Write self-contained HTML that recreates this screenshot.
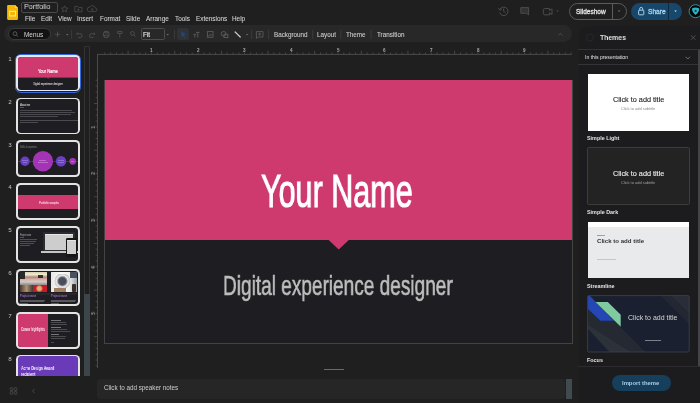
<!DOCTYPE html>
<html><head><meta charset="utf-8">
<style>
*{box-sizing:border-box;margin:0;padding:0}
html,body{width:700px;height:403px;overflow:hidden;background:#1f1f1f;font-family:"Liberation Sans",sans-serif;color:#e3e3e3}
.a{position:absolute}
.t{position:absolute;white-space:nowrap;line-height:1;will-change:transform}
svg.s{position:absolute;left:0;top:0;overflow:visible}
</style></head><body>
<svg class="s" width="700" height="403" style="z-index:1">
<path d="M8.2 5 H15 L18 8 V18.8 Q18 19.9 16.9 19.9 H8.2 Q7.1 19.9 7.1 18.8 V6.1 Q7.1 5 8.2 5 Z" fill="#f6b700"/>
<path d="M15 5 L18 8 H15 Z" fill="#fbd46a"/>
<rect x="9.6" y="11.3" width="5.9" height="4.6" fill="none" stroke="#fde7a8" stroke-width="1.1"/>
</svg>
<div class="a" style="left:21px;top:2px;width:37px;height:10.5px;border:0.8px solid #4a4a4a;border-radius:2px"></div>
<div class="t" style="left:23.8px;top:2.9px;font-size:8.0px;color:#dadada;font-weight:normal;transform:scaleX(0.9);transform-origin:0 0">Portfolio</div>
<svg class="s" width="700" height="403">
<g fill="none" stroke="#4c4c4c" stroke-width="0.8">
<path d="M64.6 5.8 L65.6 7.9 L67.8 8.2 L66.1 9.6 L66.6 11.8 L64.6 10.7 L62.6 11.8 L63.1 9.6 L61.4 8.2 L63.6 7.9 Z"/>
<path d="M74.8 6.4 H77.6 L78.6 7.4 H82 V11.8 H74.8 Z"/><path d="M78.4 8.6 V10.8 M77.3 9.7 H79.5"/>
<path d="M89.2 11.6 H95 A1.9 1.9 0 0 0 95 7.8 A2.9 2.9 0 0 0 89.6 7.2 A2.2 2.2 0 0 0 89.2 11.6 Z"/><path d="M92.2 11 V8.6 M91.2 9.6 L92.2 8.6 L93.2 9.6"/>
</g></svg>
<div class="t" style="left:24.5px;top:15.7px;font-size:6.4px;color:#d8d8d8;font-weight:normal;-webkit-text-stroke:0.05px #d8d8d8">File</div>
<div class="t" style="left:40.6px;top:15.7px;font-size:6.4px;color:#d8d8d8;font-weight:normal;-webkit-text-stroke:0.05px #d8d8d8">Edit</div>
<div class="t" style="left:57.8px;top:15.7px;font-size:6.4px;color:#d8d8d8;font-weight:normal;-webkit-text-stroke:0.05px #d8d8d8">View</div>
<div class="t" style="left:77px;top:15.7px;font-size:6.4px;color:#d8d8d8;font-weight:normal;-webkit-text-stroke:0.05px #d8d8d8">Insert</div>
<div class="t" style="left:100px;top:15.7px;font-size:6.4px;color:#d8d8d8;font-weight:normal;-webkit-text-stroke:0.05px #d8d8d8">Format</div>
<div class="t" style="left:126px;top:15.7px;font-size:6.4px;color:#d8d8d8;font-weight:normal;-webkit-text-stroke:0.05px #d8d8d8">Slide</div>
<div class="t" style="left:146px;top:15.7px;font-size:6.4px;color:#d8d8d8;font-weight:normal;-webkit-text-stroke:0.05px #d8d8d8">Arrange</div>
<div class="t" style="left:175px;top:15.7px;font-size:6.4px;color:#d8d8d8;font-weight:normal;-webkit-text-stroke:0.05px #d8d8d8">Tools</div>
<div class="t" style="left:196px;top:15.7px;font-size:6.4px;color:#d8d8d8;font-weight:normal;-webkit-text-stroke:0.05px #d8d8d8">Extensions</div>
<div class="t" style="left:232px;top:15.7px;font-size:6.4px;color:#d8d8d8;font-weight:normal;-webkit-text-stroke:0.05px #d8d8d8">Help</div>
<svg class="s" width="700" height="403">
<g fill="none" stroke="#4c4c4c" stroke-width="1">
<path d="M500 9.2 A4.3 4.3 0 1 1 499.6 12.5"/><path d="M498.6 8.2 L499.9 10.2 L501.8 9"/><path d="M503.6 8.6 V11.3 L505.4 12.5"/>
<path d="M520.8 7.6 H528.6 V15 L526.6 13.3 H520.8 Z" fill="#333"/>
<path d="M543.3 10.2 Q543.3 8.6 544.9 8.6 H549.5 V10.6 L552 8.8 V14.6 L549.5 12.8 V14.9 H544.9 Q543.3 14.9 543.3 13.3 Z"/>
</g>
<path d="M556.2 10.6 H558.8 L557.5 12 Z" fill="#4c4c4c"/>
</svg>
<div class="a" style="left:568.5px;top:2.8px;width:58.6px;height:16.9px;border:0.9px solid #5c5c5c;border-radius:9px"></div>
<div class="a" style="left:611.6px;top:2.8px;width:0.9px;height:16.9px;background:#5c5c5c"></div>
<div class="t" style="left:575.6px;top:8.5px;font-size:6.5px;color:#e3e3e3;font-weight:normal;-webkit-text-stroke:0.3px #e3e3e3">Slideshow</div>
<svg class="s" width="700" height="403"><path d="M617.8 10.6 H620.4 L619.1 12 Z" fill="#777"/></svg>
<div class="a" style="left:630.6px;top:2.8px;width:51.5px;height:16.9px;background:#17486b;border-radius:9px"></div>
<div class="a" style="left:668.4px;top:2.8px;width:0.9px;height:16.9px;background:#0e2b40"></div>
<div class="t" style="left:647.9px;top:8.5px;font-size:6.6px;color:#a9d3f2;font-weight:normal;-webkit-text-stroke:0.3px #a9d3f2">Share</div>
<svg class="s" width="700" height="403">
<rect x="638.6" y="10.2" width="5.2" height="4.6" rx="0.6" fill="none" stroke="#b8dbf5" stroke-width="0.9"/>
<path d="M639.7 10.2 V8.9 A1.5 1.5 0 0 1 642.7 8.9 V10.2" fill="none" stroke="#b8dbf5" stroke-width="0.9"/>
<path d="M674.3 10.6 H676.9 L675.6 12 Z" fill="#cfe6f7"/>
</svg>
<svg class="s" width="700" height="403">
<circle cx="695.6" cy="11.2" r="6.5" fill="#050708" stroke="#2aa3b5" stroke-width="0.9"/>
<path d="M692 8.6 Q695.6 6.6 699.2 8.6 Q699.2 12.6 695.6 15 Q692 12.6 692 8.6 Z" fill="#2ab3c4"/>
<circle cx="695.6" cy="10.9" r="1.1" fill="#1a3a44"/>
</svg>
<div class="a" style="left:4px;top:25px;width:567.5px;height:17.4px;background:#282828;border-radius:8.7px"></div>
<div class="a" style="left:8.4px;top:28.3px;width:42.6px;height:11.8px;background:#131313;border:0.9px solid #3a3a3a;border-radius:6px"></div>
<div class="t" style="left:24px;top:31.6px;font-size:6.4px;color:#d6d6d6;font-weight:normal;">Menus</div>
<svg class="s" width="700" height="403">
<g fill="none" stroke="#5e5e5e" stroke-width="0.9">
<circle cx="15" cy="33.6" r="1.9"/><path d="M16.4 35 L18 36.6"/>
</g>
<g fill="none" stroke="#505050" stroke-width="0.9">
<path d="M57.5 31.6 V37 M54.8 34.3 H60.2"/>
<path d="M77.6 32.6 L76.6 33.8 L77.8 34.8 M76.8 33.8 H80.2 A1.9 1.9 0 0 1 80.2 37.6 H78.2"/>
<path d="M94 32.6 L95 33.8 L93.8 34.8 M94.8 33.8 H91.4 A1.9 1.9 0 0 0 91.4 37.6 H93.4"/>
<path d="M104.2 32.8 V31.4 H108.2 V32.8 M103.4 32.8 H109 V36.2 H107.8 M104.6 36.2 H103.4 V32.8 M104.6 35.2 H107.8 V37.6 H104.6 Z"/>
<path d="M117.6 31.4 H122 V33.4 H117.6 Z M119.8 33.4 V34.6 M119.8 34.6 V37.6"/>
<circle cx="132.4" cy="33.4" r="1.9"/><path d="M133.8 34.8 L135.6 36.6"/>
</g>
<path d="M66 34 H68.6 L67.3 35.4 Z" fill="#6a6a6a"/>
<rect x="71.2" y="30" width="0.9" height="9" fill="#3e3e3e"/>
<path d="M166.4 34 H169 L167.7 35.4 Z" fill="#6a6a6a"/>
<rect x="174" y="30" width="0.9" height="9" fill="#3e3e3e"/>
</svg>
<div class="a" style="left:141.4px;top:28.3px;width:23.8px;height:11.8px;border:0.9px solid #4c4c4c;border-radius:1.5px"></div>
<div class="t" style="left:142.6px;top:31.6px;font-size:6.4px;color:#e3e3e3;font-weight:normal;-webkit-text-stroke:0.15px #e3e3e3">Fit</div>
<div class="a" style="left:177px;top:28px;width:12px;height:12px;background:#303336;border-radius:2.5px"></div>
<svg class="s" width="700" height="403">
<path d="M181.2 31 L186.2 34.6 L183.8 35 L185.2 37.8 L184.2 38.3 L182.8 35.6 L181.2 37.2 Z" fill="#21467a"/>
<g fill="none" stroke="#5c5c5c" stroke-width="0.9">
<path d="M193.4 34.4 H196.2 M194.8 34.4 V37.6 M196 32.4 H199.6 M197.8 32.4 V37.6"/>
<rect x="207.4" y="31.6" width="5.6" height="5.6"/><path d="M208.4 36.2 L210 34.4 L211 35.4 L212 34.2"/>
<circle cx="223.6" cy="33.8" r="2.4"/><rect x="224" y="34.2" width="3.8" height="3.4"/>
</g>
<path d="M234.8 31.6 L240.6 37.4" stroke="#d8d8d8" stroke-width="1.3"/>
<path d="M245.8 34 H248.4 L247.1 35.4 Z" fill="#6a6a6a"/>
<rect x="251.2" y="30" width="0.9" height="9" fill="#3e3e3e"/>
<path d="M256.4 31.6 H263 V37 H258.2 L256.4 38.4 Z M259.7 32.6 V35.6 M258.2 34.1 H261.2" fill="none" stroke="#5a5a5a" stroke-width="0.9"/>
<rect x="268.2" y="30" width="0.9" height="9" fill="#3e3e3e"/>
<rect x="312.3" y="30" width="0.9" height="9" fill="#3e3e3e"/>
<rect x="340.4" y="30" width="0.9" height="9" fill="#3e3e3e"/>
<rect x="370.6" y="30" width="0.9" height="9" fill="#3e3e3e"/>
<path d="M558.4 35.4 L560.4 33.4 L562.4 35.4" fill="none" stroke="#505050" stroke-width="0.9"/>
</svg>
<div class="t" style="left:273.7px;top:32.0px;font-size:6.3px;color:#c8c8c8;font-weight:normal;-webkit-text-stroke:0.1px #c8c8c8">Background</div>
<div class="t" style="left:317px;top:32.0px;font-size:6.3px;color:#c8c8c8;font-weight:normal;-webkit-text-stroke:0.1px #c8c8c8">Layout</div>
<div class="t" style="left:346.2px;top:32.0px;font-size:6.3px;color:#c8c8c8;font-weight:normal;-webkit-text-stroke:0.1px #c8c8c8">Theme</div>
<div class="t" style="left:377px;top:32.0px;font-size:6.3px;color:#c8c8c8;font-weight:normal;-webkit-text-stroke:0.1px #c8c8c8">Transition</div>
<svg class="s" width="700" height="403">
<path d="M97 54.4 H571.5 M97.5 54.4 V368" stroke="#4a4a4a" stroke-width="1" fill="none"/>
<path d="M104.80 54.4 V52.50 M110.63 54.4 V52.50 M116.46 54.4 V52.50 M122.29 54.4 V52.50 M128.12 54.4 V50.80 M133.95 54.4 V52.50 M139.78 54.4 V52.50 M145.61 54.4 V52.50 M151.44 54.4 V52.50 M157.27 54.4 V52.50 M163.10 54.4 V52.50 M168.93 54.4 V52.50 M174.76 54.4 V50.80 M180.59 54.4 V52.50 M186.42 54.4 V52.50 M192.25 54.4 V52.50 M198.08 54.4 V52.50 M203.91 54.4 V52.50 M209.74 54.4 V52.50 M215.57 54.4 V52.50 M221.40 54.4 V50.80 M227.23 54.4 V52.50 M233.06 54.4 V52.50 M238.89 54.4 V52.50 M244.72 54.4 V52.50 M250.55 54.4 V52.50 M256.38 54.4 V52.50 M262.21 54.4 V52.50 M268.04 54.4 V50.80 M273.87 54.4 V52.50 M279.70 54.4 V52.50 M285.53 54.4 V52.50 M291.36 54.4 V52.50 M297.19 54.4 V52.50 M303.02 54.4 V52.50 M308.85 54.4 V52.50 M314.68 54.4 V50.80 M320.51 54.4 V52.50 M326.34 54.4 V52.50 M332.17 54.4 V52.50 M338.00 54.4 V52.50 M343.83 54.4 V52.50 M349.66 54.4 V52.50 M355.49 54.4 V52.50 M361.32 54.4 V50.80 M367.15 54.4 V52.50 M372.98 54.4 V52.50 M378.81 54.4 V52.50 M384.64 54.4 V52.50 M390.47 54.4 V52.50 M396.30 54.4 V52.50 M402.13 54.4 V52.50 M407.96 54.4 V50.80 M413.79 54.4 V52.50 M419.62 54.4 V52.50 M425.45 54.4 V52.50 M431.28 54.4 V52.50 M437.11 54.4 V52.50 M442.94 54.4 V52.50 M448.77 54.4 V52.50 M454.60 54.4 V50.80 M460.43 54.4 V52.50 M466.26 54.4 V52.50 M472.09 54.4 V52.50 M477.92 54.4 V52.50 M483.75 54.4 V52.50 M489.58 54.4 V52.50 M495.41 54.4 V52.50 M501.24 54.4 V50.80 M507.07 54.4 V52.50 M512.90 54.4 V52.50 M518.73 54.4 V52.50 M524.56 54.4 V52.50 M530.39 54.4 V52.50 M536.22 54.4 V52.50 M542.05 54.4 V52.50 M547.88 54.4 V50.80 M553.71 54.4 V52.50 M559.54 54.4 V52.50 M565.37 54.4 V52.50 M571.20 54.4 V52.50 M97.5 80.20 H95.60 M97.5 86.03 H95.60 M97.5 91.86 H95.60 M97.5 97.69 H95.60 M97.5 103.52 H93.90 M97.5 109.35 H95.60 M97.5 115.18 H95.60 M97.5 121.01 H95.60 M97.5 126.84 H95.60 M97.5 132.67 H95.60 M97.5 138.50 H95.60 M97.5 144.33 H95.60 M97.5 150.16 H93.90 M97.5 155.99 H95.60 M97.5 161.82 H95.60 M97.5 167.65 H95.60 M97.5 173.48 H95.60 M97.5 179.31 H95.60 M97.5 185.14 H95.60 M97.5 190.97 H95.60 M97.5 196.80 H93.90 M97.5 202.63 H95.60 M97.5 208.46 H95.60 M97.5 214.29 H95.60 M97.5 220.12 H95.60 M97.5 225.95 H95.60 M97.5 231.78 H95.60 M97.5 237.61 H95.60 M97.5 243.44 H93.90 M97.5 249.27 H95.60 M97.5 255.10 H95.60 M97.5 260.93 H95.60 M97.5 266.76 H95.60 M97.5 272.59 H95.60 M97.5 278.42 H95.60 M97.5 284.25 H95.60 M97.5 290.08 H93.90 M97.5 295.91 H95.60 M97.5 301.74 H95.60 M97.5 307.57 H95.60 M97.5 313.40 H95.60 M97.5 319.23 H95.60 M97.5 325.06 H95.60 M97.5 330.89 H95.60 M97.5 336.72 H93.90 M97.5 342.55 H95.60 M97.5 348.38 H95.60 M97.5 354.21 H95.60 M97.5 360.04 H95.60 M97.5 365.87 H95.60" stroke="#505050" stroke-width="0.8" fill="none"/>
</svg>
<div class="t" style="left:150.04px;top:49.2px;font-size:4.6px;color:#a8a8a8;font-weight:bold;">1</div>
<div class="t" style="left:196.67999999999998px;top:49.2px;font-size:4.6px;color:#a8a8a8;font-weight:bold;">2</div>
<div class="t" style="left:243.32000000000002px;top:49.2px;font-size:4.6px;color:#a8a8a8;font-weight:bold;">3</div>
<div class="t" style="left:289.96000000000004px;top:49.2px;font-size:4.6px;color:#a8a8a8;font-weight:bold;">4</div>
<div class="t" style="left:336.6px;top:49.2px;font-size:4.6px;color:#a8a8a8;font-weight:bold;">5</div>
<div class="t" style="left:383.24000000000007px;top:49.2px;font-size:4.6px;color:#a8a8a8;font-weight:bold;">6</div>
<div class="t" style="left:429.88000000000005px;top:49.2px;font-size:4.6px;color:#a8a8a8;font-weight:bold;">7</div>
<div class="t" style="left:476.52000000000004px;top:49.2px;font-size:4.6px;color:#a8a8a8;font-weight:bold;">8</div>
<div class="t" style="left:523.16px;top:49.2px;font-size:4.6px;color:#a8a8a8;font-weight:bold;">9</div>
<div class="t" style="left:92px;top:123.74px;font-size:4.6px;color:#a0a0a0;font-weight:bold;transform:rotate(-90deg);transform-origin:2.3px 2.3px">1</div>
<div class="t" style="left:92px;top:170.38px;font-size:4.6px;color:#a0a0a0;font-weight:bold;transform:rotate(-90deg);transform-origin:2.3px 2.3px">2</div>
<div class="t" style="left:92px;top:217.02px;font-size:4.6px;color:#a0a0a0;font-weight:bold;transform:rotate(-90deg);transform-origin:2.3px 2.3px">3</div>
<div class="t" style="left:92px;top:263.66px;font-size:4.6px;color:#a0a0a0;font-weight:bold;transform:rotate(-90deg);transform-origin:2.3px 2.3px">4</div>
<div class="t" style="left:92px;top:310.30px;font-size:4.6px;color:#a0a0a0;font-weight:bold;transform:rotate(-90deg);transform-origin:2.3px 2.3px">5</div>
<div class="a" style="left:103.9px;top:79.6px;width:469px;height:264.2px;background:#434343"></div>
<div class="a" style="left:104.8px;top:80.2px;width:467.2px;height:262.4px;background:#1e1d22"></div>
<div class="a" style="left:104.8px;top:80.2px;width:467.2px;height:159.6px;background:#cf3a6e"></div>
<svg class="s" width="700" height="403"><path d="M328.6 240 L348.8 240 L338.7 249.4 Z" fill="#cf3a6e"/></svg>
<div class="t" style="left:261.2px;top:168.5px;font-size:45.6px;color:#ffffff;font-weight:normal;transform:scaleX(0.67);transform-origin:0 0;-webkit-text-stroke:1.1px #fff">Your Name</div>
<div class="t" style="left:222.8px;top:271.7px;font-size:27.6px;color:#bdbdbd;font-weight:normal;transform:scaleX(0.69);transform-origin:0 0;-webkit-text-stroke:0.6px #bdbdbd">Digital experience designer</div>
<div class="a" style="left:324.3px;top:369px;width:20.2px;height:0.9px;background:#6a6a6a"></div>
<div class="a" style="left:97.1px;top:379px;width:468.4px;height:19.8px;background:#262626;border-radius:3px"></div>
<div class="t" style="left:104px;top:385.0px;font-size:6.3px;color:#cfcfcf;font-weight:normal;">Click to add speaker notes</div>
<div class="a" style="left:565.5px;top:378.6px;width:6.3px;height:20.4px;background:#414a4f;border-radius:0"></div>
<div class="t" style="left:10.2px;top:55.9px;font-size:6.2px;color:#c4c7c5;font-weight:normal;transform:translateX(-50%)">1</div>
<div class="a" style="left:15.100000000000001px;top:53.9px;width:66.1px;height:38.9px;border:1.6px solid #3567dc;border-radius:5.8px"></div>
<div class="a" style="left:16.400000000000002px;top:54.8px;width:63.5px;height:36.699999999999996px;background:#e6e9f2;border-radius:4.4px"></div>
<div class="a" style="left:18.1px;top:56.50px;width:60.1px;height:33.3px;border-radius:3px;overflow:hidden;background:#1e1d22"><div class="a" style="left:0;top:0;width:466.5px;height:262.4px;transform:scale(0.12883);transform-origin:0 0"><div class="a" style="left:0px;top:0px;width:466.5px;height:160px;background:#cf3a6e"></div><svg class="s" width="466" height="262"><path d="M223.8 159.8 L244 159.8 L233.9 169.2 Z" fill="#cf3a6e"/></svg><div class="t" style="left:156.4px;top:88.3px;font-size:45.6px;color:#fff;font-weight:normal;transform:scaleX(0.67);transform-origin:0 0;-webkit-text-stroke:1.5px #fff">Your Name</div><div class="t" style="left:118px;top:192.3px;font-size:27.6px;color:#c8c8c8;font-weight:normal;transform:scaleX(0.69);transform-origin:0 0;-webkit-text-stroke:1px #c8c8c8">Digital experience designer</div></div></div>
<div class="t" style="left:10.2px;top:98.75px;font-size:6.2px;color:#c4c7c5;font-weight:normal;transform:translateX(-50%)">2</div>
<div class="a" style="left:16.3px;top:97.55px;width:63.7px;height:36.9px;background:#e3e3e3;border-radius:4.6px"></div>
<div class="a" style="left:18.1px;top:99.35px;width:60.1px;height:33.3px;border-radius:3px;overflow:hidden;background:#1e1d22"><div class="t" style="left:2.0px;top:4.2px;font-size:3.1px;color:#d4d4d4;font-weight:bold;transform:scaleX(0.72);transform-origin:0 0">About me</div><div class="a" style="left:2.0px;top:7.3px;width:4.4px;height:0.5px;background:#555"></div><div class="a" style="left:2.0px;top:10.2px;width:51.9px;height:0.9px;background:#4a4a4f"></div><div class="a" style="left:2.0px;top:12.4px;width:55.1px;height:0.9px;background:#4a4a4f"></div><div class="a" style="left:2.0px;top:14.5px;width:51px;height:0.9px;background:#4a4a4f"></div><div class="a" style="left:2.0px;top:16.5px;width:38.2px;height:0.9px;background:#4a4a4f"></div><div class="a" style="left:2.0px;top:20.2px;width:57.9px;height:0.9px;background:#4a4a4f"></div><div class="a" style="left:2.0px;top:22.5px;width:17.7px;height:0.9px;background:#4a4a4f"></div></div>
<div class="t" style="left:10.2px;top:141.6px;font-size:6.2px;color:#c4c7c5;font-weight:normal;transform:translateX(-50%)">3</div>
<div class="a" style="left:16.3px;top:140.39999999999998px;width:63.7px;height:36.9px;background:#e3e3e3;border-radius:4.6px"></div>
<div class="a" style="left:18.1px;top:142.20px;width:60.1px;height:33.3px;border-radius:3px;overflow:hidden;background:#1e1d22"><div class="t" style="left:2.2px;top:5.0px;font-size:2.7px;color:#8a8a8a;font-weight:normal;transform:scaleX(0.82);transform-origin:0 0">Skills &amp; expertise</div><div class="a" style="left:0px;top:19.2px;width:60.1px;height:0.4px;background:#3a3a3e"></div><svg class="s" width="62" height="34"><circle cx="7.0" cy="19.3" r="4.7" fill="#6b3fc4"/><circle cx="24.9" cy="19.3" r="10.2" fill="#a234b5"/><circle cx="43.0" cy="19.3" r="5.2" fill="#6b3fc4"/><circle cx="54.7" cy="19.3" r="3.4" fill="#a234b5"/></svg><div class="a" style="left:4.3px;top:18.2px;width:5.4px;height:0.5px;background:#8a6cd6"></div><div class="a" style="left:4.6px;top:19.8px;width:4.8px;height:0.5px;background:#8a6cd6"></div><div class="a" style="left:21.4px;top:18.0px;width:7px;height:0.5px;background:#c06bcf"></div><div class="a" style="left:19.6px;top:20.2px;width:10.6px;height:0.5px;background:#c06bcf"></div><div class="a" style="left:40.2px;top:18.2px;width:5.6px;height:0.5px;background:#8a6cd6"></div><div class="a" style="left:40.4px;top:19.8px;width:5.2px;height:0.5px;background:#8a6cd6"></div><div class="a" style="left:53.2px;top:19.1px;width:3px;height:0.5px;background:#c06bcf"></div></div>
<div class="t" style="left:10.2px;top:184.45000000000002px;font-size:6.2px;color:#c4c7c5;font-weight:normal;transform:translateX(-50%)">4</div>
<div class="a" style="left:16.3px;top:183.25px;width:63.7px;height:36.9px;background:#e3e3e3;border-radius:4.6px"></div>
<div class="a" style="left:18.1px;top:185.05px;width:60.1px;height:33.3px;border-radius:3px;overflow:hidden;background:#1e1d22"><div class="a" style="left:0px;top:9.6px;width:60.1px;height:14.2px;background:#cf3a6e"></div><div class="t" style="left:30.6px;top:16.9px;font-size:3.1px;color:#f8dce6;font-weight:bold;transform:translateX(-50%) scaleX(0.76)">Portfolio samples</div></div>
<div class="t" style="left:10.2px;top:227.3px;font-size:6.2px;color:#c4c7c5;font-weight:normal;transform:translateX(-50%)">5</div>
<div class="a" style="left:16.3px;top:226.1px;width:63.7px;height:36.9px;background:#e3e3e3;border-radius:4.6px"></div>
<div class="a" style="left:18.1px;top:227.90px;width:60.1px;height:33.3px;border-radius:3px;overflow:hidden;background:#1e1d22"><div class="t" style="left:2.1px;top:7.4px;font-size:2.6px;color:#bdbdbd;font-weight:normal;transform:scaleX(0.72);transform-origin:0 0">Project name</div><div class="a" style="left:2.1px;top:9.4px;width:3.8px;height:0.4px;background:#555"></div><div class="a" style="left:2.1px;top:11.5px;width:16.8px;height:0.8px;background:#4e4e52"></div><div class="a" style="left:2.1px;top:13.3px;width:16.2px;height:0.8px;background:#4e4e52"></div><div class="a" style="left:2.1px;top:15.1px;width:13.5px;height:0.8px;background:#4e4e52"></div><div class="a" style="left:2.1px;top:16.9px;width:10px;height:0.8px;background:#4e4e52"></div><div class="a" style="left:25.3px;top:4.1px;width:31.6px;height:19.2px;background:#2c2c2e;border-radius:1px"></div><div class="a" style="left:26.7px;top:6.0px;width:28.3px;height:15.8px;background:#cdcdcd"></div><div class="a" style="left:26.7px;top:6.0px;width:28.3px;height:1.6px;background:#e6e6e6"></div><div class="a" style="left:22.6px;top:23.1px;width:38px;height:2.1px;background:#c6c6c6"></div><div class="a" style="left:47.9px;top:10.2px;width:10.8px;height:19.2px;background:#161616;border-radius:1.4px"></div><div class="a" style="left:49.1px;top:12.0px;width:8.5px;height:14.6px;background:#cfcfcf"></div><div class="a" style="left:49.1px;top:12.0px;width:8.5px;height:1.2px;background:#e4e4e4"></div></div>
<div class="t" style="left:10.2px;top:270.15px;font-size:6.2px;color:#c4c7c5;font-weight:normal;transform:translateX(-50%)">6</div>
<div class="a" style="left:16.3px;top:268.95px;width:63.7px;height:36.9px;background:#e3e3e3;border-radius:4.6px"></div>
<div class="a" style="left:18.1px;top:270.75px;width:60.1px;height:33.3px;border-radius:3px;overflow:hidden;background:#1e1d22"><div class="a" style="left:1.9px;top:0.9px;width:26.9px;height:13.7px;background:linear-gradient(180deg,#d8d2b0 0%,#f0ead0 20%,#a88a80 40%,#e0a8a0 55%,#d0ccc8 75%,#8a8a8a 100%)"></div><div class="a" style="left:1.9px;top:0.9px;width:5px;height:7px;background:#2a2a2a"></div><div class="a" style="left:20px;top:4.5px;width:5px;height:3px;background:#303030"></div><div class="a" style="left:1.9px;top:14.6px;width:13.5px;height:7.1px;background:linear-gradient(90deg,#4a3a2a,#b09070 50%,#3a3a3a)"></div><div class="a" style="left:15.4px;top:14.6px;width:13.4px;height:7.1px;background:radial-gradient(circle at 45% 50%,#e0b070 0 22%,#c8182a 45%)"></div><div class="a" style="left:32.6px;top:0.9px;width:26.4px;height:20.8px;background:linear-gradient(90deg,#e8e8e8 0%,#fafaf8 40%,#f0f0f0 70%,#9aa0a8 100%)"></div><div class="a" style="left:52px;top:0.9px;width:7px;height:6px;background:#4a5260"></div><div class="a" style="left:34.6px;top:3.2px;width:17px;height:16px;background:radial-gradient(circle at 55% 45%,#4a4e58 0 26%,#7a7e88 34%,#ecebea 44%,#c8c4bc 60%,rgba(0,0,0,0) 62%)"></div><div class="a" style="left:54px;top:13px;width:4px;height:8px;background:#3a2e26;border-radius:1px"></div><div class="a" style="left:36px;top:17px;width:12px;height:4.7px;background:#a08060"></div><div class="a" style="left:1.9px;top:22.2px;width:57.1px;height:2.4px;background:#26262b"></div><div class="t" style="left:1.9px;top:25.4px;font-size:2.6px;color:#a26ac6;font-weight:bold;">Project name</div><div class="t" style="left:32.6px;top:25.4px;font-size:2.6px;color:#a26ac6;font-weight:bold;">Project name</div><div class="a" style="left:1.9px;top:28.8px;width:25px;height:0.6px;background:#58585c"></div><div class="a" style="left:1.9px;top:30.5px;width:24px;height:0.6px;background:#58585c"></div><div class="a" style="left:1.9px;top:31.8px;width:8px;height:0.6px;background:#58585c"></div><div class="a" style="left:32.6px;top:28.8px;width:25px;height:0.6px;background:#58585c"></div><div class="a" style="left:32.6px;top:30.5px;width:24px;height:0.6px;background:#58585c"></div><div class="a" style="left:32.6px;top:31.8px;width:8px;height:0.6px;background:#58585c"></div></div>
<div class="t" style="left:10.2px;top:313.0px;font-size:6.2px;color:#c4c7c5;font-weight:normal;transform:translateX(-50%)">7</div>
<div class="a" style="left:16.3px;top:311.8px;width:63.7px;height:36.9px;background:#e3e3e3;border-radius:4.6px"></div>
<div class="a" style="left:18.1px;top:313.60px;width:60.1px;height:33.3px;border-radius:3px;overflow:hidden;background:#1e1d22"><div class="a" style="left:0px;top:0px;width:30.3px;height:33.3px;background:#cf3a6e"></div><div class="t" style="left:3.0px;top:13.4px;font-size:5.0px;color:#fbe3eb;font-weight:bold;transform:scaleX(0.58);transform-origin:0 0">Career highlights</div><div class="a" style="left:32.8px;top:6.6px;width:10px;height:0.7px;background:#76767a"></div><div class="a" style="left:32.8px;top:8.4px;width:15px;height:0.7px;background:#4a4a4f"></div><div class="a" style="left:32.8px;top:10.3px;width:16px;height:0.7px;background:#4a4a4f"></div><div class="a" style="left:32.8px;top:13.6px;width:10px;height:0.7px;background:#76767a"></div><div class="a" style="left:32.8px;top:15.4px;width:16px;height:0.7px;background:#4a4a4f"></div><div class="a" style="left:32.8px;top:17.3px;width:19px;height:0.7px;background:#4a4a4f"></div><div class="a" style="left:32.8px;top:20.6px;width:8px;height:0.7px;background:#76767a"></div><div class="a" style="left:32.8px;top:22.4px;width:15px;height:0.7px;background:#4a4a4f"></div><div class="a" style="left:32.8px;top:24.2px;width:14px;height:0.7px;background:#4a4a4f"></div><div class="a" style="left:32.8px;top:28.4px;width:3px;height:0.7px;background:#4a4a4f"></div></div>
<div class="t" style="left:10.2px;top:355.84999999999997px;font-size:6.2px;color:#c4c7c5;font-weight:normal;transform:translateX(-50%)">8</div>
<div class="a" style="left:0;top:0;width:100px;height:375.8px;overflow:hidden"><div class="a" style="left:16.3px;top:354.65px;width:63.7px;height:36.9px;background:#e3e3e3;border-radius:4.6px"></div><div class="a" style="left:18.1px;top:356.45px;width:60.1px;height:33.3px;background:#6a3bb8;border-radius:3px"></div><div class="t" style="left:21.2px;top:365.65px;font-size:6.0px;line-height:5.5px;font-weight:bold;color:#f4eefe;transform:scaleX(0.575);transform-origin:0 0">Acme Design Award<br>recipient</div></div>
<div class="a" style="left:83.8px;top:46.2px;width:6.2px;height:329.5px;border:0.8px solid #333;border-radius:1px"></div>
<div class="a" style="left:84.0px;top:294.2px;width:6.0px;height:81.5px;background:#3c4549"></div>
<svg class="s" width="700" height="403">
<g fill="none" stroke="#4a4a4a" stroke-width="0.9">
<rect x="10.2" y="387.8" width="2.6" height="2.6" rx="0.4"/><rect x="14.2" y="387.8" width="2.6" height="2.6" rx="0.4"/>
<rect x="10.2" y="391.6" width="2.6" height="2.6" rx="0.4"/><rect x="14.2" y="391.6" width="2.6" height="2.6" rx="0.4"/>
<path d="M34.6 388.8 L32.6 391 L34.6 393.2"/>
</g></svg>
<div class="a" style="left:579px;top:25.6px;width:130px;height:400px;background:#1c1c1f;border-radius:10px 0 0 0"></div>
<svg class="s" width="700" height="403">
<circle cx="590" cy="37.6" r="3.6" fill="none" stroke="#29292c" stroke-width="0.9"/>
<path d="M691 35.4 L695.4 39.8 M695.4 35.4 L691 39.8" stroke="#555" stroke-width="0.9"/>
<path d="M685.6 56.8 L687.8 59 L690 56.8" stroke="#777" stroke-width="0.9" fill="none"/>
</svg>
<div class="t" style="left:600.3px;top:34.0px;font-size:7.8px;color:#e3e3e3;font-weight:bold;transform:scaleX(0.88);transform-origin:0 0">Themes</div>
<div class="a" style="left:578.4px;top:49px;width:122px;height:0.8px;background:#333336"></div>
<div class="t" style="left:584.9px;top:55.0px;font-size:5.1px;color:#d4d4d4;font-weight:normal;-webkit-text-stroke:0.05px #d4d4d4">In this presentation</div>
<div class="a" style="left:578.4px;top:64.3px;width:122px;height:0.8px;background:#333336"></div>
<div class="a" style="left:698px;top:49.7px;width:2px;height:316px;background:#444447"></div>
<div class="a" style="left:587.9px;top:74px;width:100.8px;height:57px;background:#ffffff"></div>
<div class="t" style="left:612.7px;top:96.0px;font-size:7.27px;color:#202020;font-weight:normal;-webkit-text-stroke:0.1px #202020">Click to add title</div>
<div class="t" style="left:621.3px;top:106.8px;font-size:3.94px;color:#888888;font-weight:normal;">Click to add subtitle</div>
<div class="t" style="left:587.1px;top:136.2px;font-size:5.4px;color:#e3e3e3;font-weight:bold;">Simple Light</div>
<div class="a" style="left:587.2px;top:147.1px;width:102.4px;height:58.2px;background:#232323;border:0.9px solid #3c3c3c;border-radius:1.5px"></div>
<div class="t" style="left:612.5px;top:169.8px;font-size:7.27px;color:#f0f0f0;font-weight:normal;-webkit-text-stroke:0.1px #f0f0f0">Click to add title</div>
<div class="t" style="left:621.3px;top:180.6px;font-size:3.94px;color:#a0a0a0;font-weight:normal;">Click to add subtitle</div>
<div class="t" style="left:587.1px;top:210.2px;font-size:5.4px;color:#e3e3e3;font-weight:bold;">Simple Dark</div>
<div class="a" style="left:587.9px;top:222px;width:101.1px;height:56.3px;background:#e8eaeb"></div>
<div class="a" style="left:587.9px;top:222px;width:101.1px;height:5px;background:#ffffff"></div>
<div class="a" style="left:596.9px;top:234.6px;width:4px;height:0.9px;background:#5fb8b0"></div>
<div class="a" style="left:600.9px;top:234.6px;width:4.4px;height:0.9px;background:#ef8a6a"></div>
<div class="t" style="left:596.6px;top:237.6px;font-size:6.1px;color:#333333;font-weight:bold;">Click to add title</div>
<div class="a" style="left:597px;top:258.7px;width:19px;height:0.6px;background:#c4c6c8"></div>
<div class="t" style="left:587.1px;top:284.2px;font-size:5.4px;color:#e3e3e3;font-weight:bold;">Streamline</div>
<svg class="s" width="700" height="403">
<defs><clipPath id="fc"><rect x="587.6" y="295.6" width="101.6" height="56.4"/></clipPath></defs>
<g clip-path="url(#fc)">
<rect x="587.2" y="295.2" width="102.4" height="57.2" fill="#1b2030"/>
<path d="M587.5 308.4 L600.4 320.7 L614 320.7 L645.7 352.4 L587.5 352.4 Z" fill="#242932"/>
<path d="M587.5 324.6 L631 352.4 L609.6 352.4 L587.5 328.5 Z" fill="#2c313a"/>
<path d="M587.5 328.5 L609.6 352.4 L587.5 352.4 Z" fill="#1b2030"/>
<path d="M660 295.2 L690 295.2 L690 325 Z" fill="#222733"/>
<path d="M670.6 295.2 L690 295.2 L690 314.2 Z" fill="#282d38"/>
<path d="M587.4 295.4 L589.5 295.4 L614 320.7 L600.4 320.7 L587.4 308.4 Z" fill="#2447b5"/>
<path d="M595.5 301.9 L607.8 301.9 L620.7 314.8 L620.7 326.8 Z" fill="#7fcba0"/>
</g>
<rect x="587.6" y="295.6" width="101.6" height="56.4" rx="1.2" fill="none" stroke="#3a3f4b" stroke-width="0.9"/>
</svg>
<div class="t" style="left:627.8px;top:314.0px;font-size:7.0px;color:#d4d4d4;font-weight:normal;">Click to add title</div>
<div class="a" style="left:645.2px;top:340.4px;width:15.6px;height:0.6px;background:#7c808a"></div>
<div class="t" style="left:587.1px;top:358.0px;font-size:5.4px;color:#e3e3e3;font-weight:bold;">Focus</div>
<div class="a" style="left:578.4px;top:365.8px;width:122px;height:0.8px;background:#2c2c2f"></div>
<div class="a" style="left:612px;top:374.7px;width:58.6px;height:16.3px;background:#163f5c;border-radius:8.2px"></div>
<div class="t" style="left:622.4px;top:380.6px;font-size:5.9px;color:#a9cbe8;font-weight:bold;">Import theme</div>
</body></html>
